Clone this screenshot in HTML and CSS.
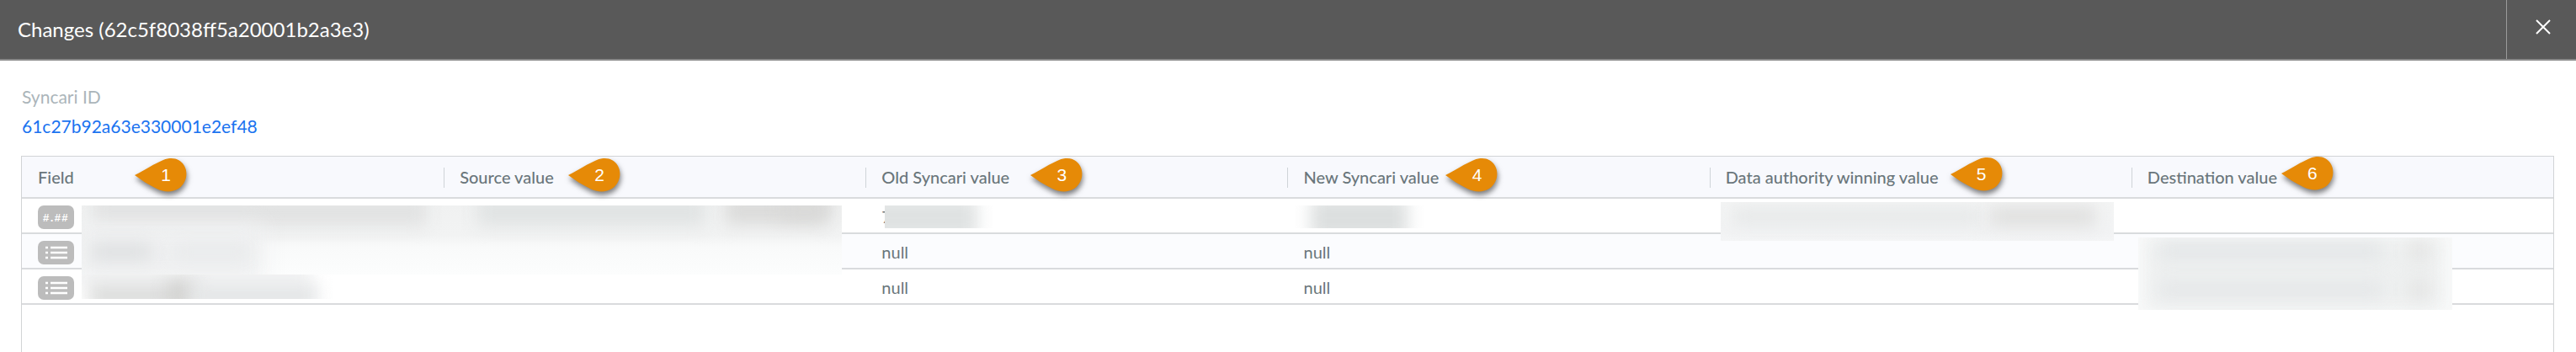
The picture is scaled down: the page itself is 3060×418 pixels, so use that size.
FILE: index.html
```html
<!DOCTYPE html>
<html lang="en">
<head>
<meta charset="utf-8">
<title>Changes</title>
<link rel="stylesheet" href="styles.css">
</head>
<body>
<div class="modal">
  <header class="bar">
    <h1 class="title">Changes (62c5f8038ff5a20001b2a3e3)</h1>
    <button class="close" aria-label="Close">
      <svg class="close-x" width="18" height="18" viewBox="0 0 18 18"><path d="M1 1L17 17M17 1L1 17"/></svg>
    </button>
  </header>
  <main class="content">
    <div class="meta">
      <div class="meta-label">Syncari ID</div>
      <a class="meta-link">61c27b92a63e330001e2ef48</a>
    </div>
    <section class="table">
      <div class="row head">
        <div class="cell"><span>Field</span>
          <span class="pin pin1"><svg class="drop" viewBox="0 0 62 40"><path d="M0 20C12 14 24 6 34 2C44-2 54 0 59 9C64 18 61 30 52 36C44 41 34 40 26 36C16 31 8 26 0 20Z"/></svg><b class="num">1</b></span></div>
        <div class="cell"><i class="sep"></i><span>Source value</span>
          <span class="pin pin2"><svg class="drop" viewBox="0 0 62 40"><path d="M0 20C12 14 24 6 34 2C44-2 54 0 59 9C64 18 61 30 52 36C44 41 34 40 26 36C16 31 8 26 0 20Z"/></svg><b class="num">2</b></span></div>
        <div class="cell"><i class="sep"></i><span>Old Syncari value</span>
          <span class="pin pin3"><svg class="drop" viewBox="0 0 62 40"><path d="M0 20C12 14 24 6 34 2C44-2 54 0 59 9C64 18 61 30 52 36C44 41 34 40 26 36C16 31 8 26 0 20Z"/></svg><b class="num">3</b></span></div>
        <div class="cell"><i class="sep"></i><span>New Syncari value</span>
          <span class="pin pin4"><svg class="drop" viewBox="0 0 62 40"><path d="M0 20C12 14 24 6 34 2C44-2 54 0 59 9C64 18 61 30 52 36C44 41 34 40 26 36C16 31 8 26 0 20Z"/></svg><b class="num">4</b></span></div>
        <div class="cell"><i class="sep"></i><span>Data authority winning value</span>
          <span class="pin pin5"><svg class="drop" viewBox="0 0 62 40"><path d="M0 20C12 14 24 6 34 2C44-2 54 0 59 9C64 18 61 30 52 36C44 41 34 40 26 36C16 31 8 26 0 20Z"/></svg><b class="num">5</b></span></div>
        <div class="cell"><i class="sep"></i><span>Destination value</span>
          <span class="pin pin6"><svg class="drop" viewBox="0 0 62 40"><path d="M0 20C12 14 24 6 34 2C44-2 54 0 59 9C64 18 61 30 52 36C44 41 34 40 26 36C16 31 8 26 0 20Z"/></svg><b class="num">6</b></span></div>
      </div>
      <div class="row">
        <div class="cell"><span class="type type-num">#.##</span></div>
        <div class="cell"></div>
        <div class="cell">7</div>
        <div class="cell"></div>
        <div class="cell"></div>
        <div class="cell"></div>
      </div>
      <div class="row alt">
        <div class="cell"><span class="type"><svg width="26" height="16" viewBox="0 0 26 16"><path class="list" d="M6 2H26M6 8H26M6 14H26M0 2H3M0 8H3M0 14H3"/></svg></span></div>
        <div class="cell"></div>
        <div class="cell">null</div>
        <div class="cell">null</div>
        <div class="cell"></div>
        <div class="cell"></div>
      </div>
      <div class="row">
        <div class="cell"><span class="type"><svg width="26" height="16" viewBox="0 0 26 16"><path class="list" d="M6 2H26M6 8H26M6 14H26M0 2H3M0 8H3M0 14H3"/></svg></span></div>
        <div class="cell"></div>
        <div class="cell">null</div>
        <div class="cell">null</div>
        <div class="cell"></div>
        <div class="cell"></div>
      </div>
      <div class="patch patch-a-low">
        <i class="smear l1"></i><i class="smear l2"></i><i class="smear l3"></i><i class="smear l4"></i>
      </div>
      <div class="patch patch-a">
        <i class="smear a1"></i><i class="smear a2"></i><i class="smear a3"></i><i class="smear a4"></i><i class="smear a5"></i><i class="smear a6"></i><i class="smear a7"></i>
      </div>
      <div class="patch patch-b"><i class="smear b1"></i></div>
      <div class="patch patch-c"><i class="smear c1"></i></div>
      <div class="patch patch-d"><i class="smear d1"></i><i class="smear d2"></i></div>
      <div class="patch patch-e"><i class="smear e0"></i><i class="smear e1"></i><i class="smear e2"></i><i class="smear e3"></i><i class="smear e4"></i></div>
    </section>
  </main>
</div>
</body>
</html>
```
FILE: styles.css
```css
* { box-sizing: border-box; }
html, body { margin: 0; height: 100%; background: #fff; overflow: hidden; }
body { font-family: Lato, "Noto Sans", sans-serif; color: #6a767b; }

.modal { height: 418px; display: flex; flex-direction: column; overflow: hidden; }

.bar {
  height: 72px; flex: none; display: flex; align-items: stretch; justify-content: space-between;
  background: #595959; border-bottom: 2px solid #8a8a8a;
}
.title { margin: 0; padding: 0 0 2px 21px; align-self: center; font-size: 24px; font-weight: 400; color: #fff; }
.close {
  width: 83px; padding: 0 0 6px 3px; background: none; border: 0; border-left: 1px solid #9a9a9a;
  display: flex; align-items: center; justify-content: center;
}
.close-x path { stroke: #fff; stroke-width: 2; fill: none; }

.content { flex: 1; min-height: 0; display: flex; flex-direction: column; padding: 31px 26px 0 25px; }
.meta { height: 82px; flex: none; }
.meta-label { padding-left: 1px; font-size: 21px; line-height: 24px; color: #abb5ba; }
.meta-link { display: block; margin-top: 11px; padding-left: 1px; font-size: 21px; line-height: 24px; color: #1a73f0; }

.table { position: relative; flex: 1; border: 1px solid #d2d4d6; border-bottom: 0; }
.row { display: grid; grid-template-columns: repeat(6, 1fr); height: 42px; border-bottom: 2px solid #d9dbdd; background: #fff; }
.row.alt { background: #fbfcfe; }
.row.head { height: 50px; background: #f8f9fd; font-weight: 500; }
.cell { position: relative; display: flex; align-items: center; padding: 2px 0 0 19px; font-size: 20px; }
.head .cell { padding-top: 0; }
.sep { position: absolute; left: 0; top: 13px; width: 1px; height: 24px; background: #cfd4d8; }

.type {
  width: 43px; height: 28px; margin-top: 2px; border-radius: 7px; background: #bcbcbc; color: #fff;
  display: flex; align-items: center; justify-content: center;
}
.type-num { font: bold 13px/1 "Liberation Sans", sans-serif; letter-spacing: 1.4px; }
.list { stroke: #fff; stroke-width: 2.4; fill: none; }

.pin { position: absolute; top: 2px; width: 62px; height: 40px; color: #fff; }
.pin1 { left: 134px; }
.pin2 { left: 148px; }
.pin3 { left: 196px; }
.pin4 { left: 188px; }
.pin5 { left: 286px; top: 1px; }
.pin6 { left: 178px; top: 0; }
.drop { display: block; width: 62px; height: 40px; overflow: visible; filter: drop-shadow(1px 4px 3px rgba(40, 40, 40, 0.6)); }
.drop path { fill: #e68a07; }
.num {
  position: absolute; left: 25px; top: 7px; width: 24px; text-align: center;
  font: 400 21px/26px "Liberation Sans", sans-serif;
}

.patch { position: absolute; overflow: hidden; background: #fff; }
.smear { position: absolute; display: block; filter: blur(10px); background: #d9dbdb; }

.patch-a {
  left: 71px; top: 58px; width: 903px; height: 82px;
  background: linear-gradient(#f0f1f1 0, #f2f3f3 35px, #f9fafa 50px, #fcfdfd 100%);
}
.a1 { left: 14px; top: -10px; width: 395px; height: 34px; background: #e1e2e2; }
.a2 { left: 470px; top: -10px; width: 270px; height: 34px; background: #e0e3e3; }
.a3 { left: 765px; top: -10px; width: 120px; height: 32px; background: #dadad9; }
.a4 { left: -10px; top: 22px; width: 225px; height: 70px; background: #eff0f1; filter: blur(12px); }
.a5 { left: 12px; top: 46px; width: 70px; height: 18px; background: #dcdedf; }
.a6 { left: 110px; top: 48px; width: 90px; height: 14px; background: #e7e9ea; }
.a7 { left: 830px; top: -8px; width: 60px; height: 24px; background: #d9d9d8; }

.patch-a-low { left: 71px; top: 140px; width: 320px; height: 29px; background: #fff; }
.l1 { left: -10px; top: -10px; width: 280px; height: 22px; background: #eff0f1; filter: blur(10px); }
.l2 { left: 8px; top: 10px; width: 130px; height: 30px; background: #dcdddc; }
.l3 { left: 100px; top: 8px; width: 30px; height: 30px; background: #d4d4d2; }
.l4 { left: 130px; top: 10px; width: 150px; height: 30px; background: #e3e5e6; }

.patch-b { left: 1025px; top: 58px; width: 140px; height: 27px; }
.b1 { left: -20px; top: -10px; width: 130px; height: 50px; background: #dfe2e2; }

.patch-c { left: 1499px; top: 58px; width: 180px; height: 27px; }
.c1 { left: 32px; top: -10px; width: 115px; height: 50px; background: #dcdfdf; }

.patch-d {
  left: 2018px; top: 54px; width: 467px; height: 46px;
  background: linear-gradient(#f3f4f4, #f2f3f4 80%, #f4f5f6);
}
.d1 { left: 14px; top: 8px; width: 295px; height: 18px; background: #e5e7e7; }
.d2 { left: 320px; top: 6px; width: 125px; height: 22px; background: #dededd; }

.patch-e { left: 2514px; top: 96px; width: 373px; height: 86px; background: #f8f9f9; }
.e0 { left: 10px; top: 0; width: 350px; height: 86px; background: #eef0f0; filter: blur(10px); }
.e1 { left: 25px; top: 8px; width: 265px; height: 16px; background: #e1e4e6; }
.e2 { left: 25px; top: 54px; width: 265px; height: 16px; background: #e3e5e7; }
.e3 { left: 322px; top: 6px; width: 24px; height: 20px; background: #e3e3e2; }
.e4 { left: 322px; top: 52px; width: 24px; height: 20px; background: #e3e3e2; }
```
